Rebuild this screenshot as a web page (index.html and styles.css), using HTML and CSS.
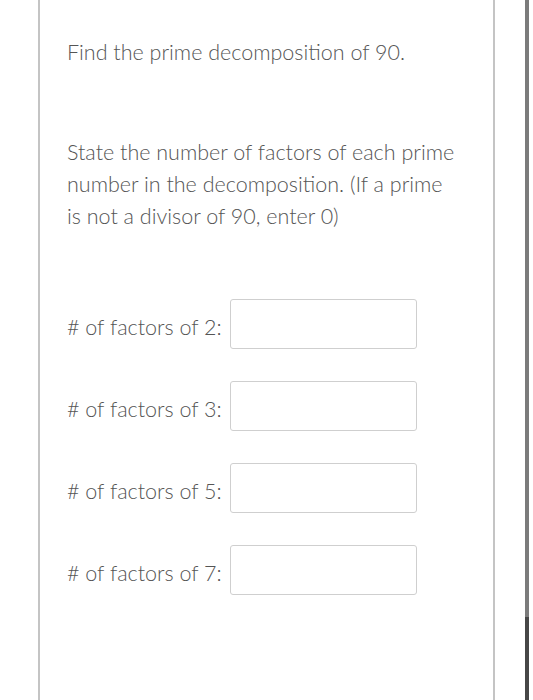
FILE: index.html
```html
<!DOCTYPE html>
<html>
<head>
<meta charset="utf-8">
<link rel="stylesheet" href="styles.css">
</head>
<body>
<div class="page">
  <div class="card">
    <p class="question">Find the prime decomposition of 90.</p>
    <p class="instructions">State the number of factors of each prime number in the decomposition. (If a prime is not a divisor of 90, enter 0)</p>
    <div class="rows">
      <div class="row"><label class="label"># of factors of 2:</label><input class="answer" type="text"></div>
      <div class="row"><label class="label"># of factors of 3:</label><input class="answer" type="text"></div>
      <div class="row"><label class="label"># of factors of 5:</label><input class="answer" type="text"></div>
      <div class="row"><label class="label"># of factors of 7:</label><input class="answer" type="text"></div>
    </div>
  </div>
  <div class="scrollbar"></div>
</div>
</body>
</html>
```
FILE: styles.css
```css
html, body {
  margin: 0;
  padding: 0;
  background: #ffffff;
}
.page {
  display: flex;
  height: 700px;
  overflow: hidden;
  font-family: Lato, "Open Sans", sans-serif;
  font-weight: 300;
  color: #555555;
  font-size: 21.5px;
  line-height: 32px;
}
.card {
  margin-left: 38px;
  width: 426px;
  flex: none;
  border-left: 2px solid #c4c4c4;
  border-right: 2px solid #c4c4c4;
  padding: 36px 0 0 27px;
  box-sizing: content-box;
}
.question {
  margin: 0;
}
.instructions {
  margin: 68px 0 0 0;
  width: 388px;
}
.rows {
  margin-top: 67px;
  display: flex;
  flex-direction: column;
  gap: 32px;
}
.row {
  display: flex;
  align-items: flex-end;
  gap: 8px;
}
.label {
  margin-bottom: 6px;
  white-space: nowrap;
}
.answer {
  width: 187px;
  height: 50px;
  box-sizing: border-box;
  border: 1px solid #cfcfcf;
  border-radius: 3px;
  margin: 0;
  padding: 0 8px;
  font: inherit;
  background: #fff;
}
.scrollbar {
  margin-left: 30px;
  width: 4px;
  flex: none;
  background: linear-gradient(#7b7b7b 0, #7b7b7b 617px, #474747 617px, #474747 100%);
}
```
